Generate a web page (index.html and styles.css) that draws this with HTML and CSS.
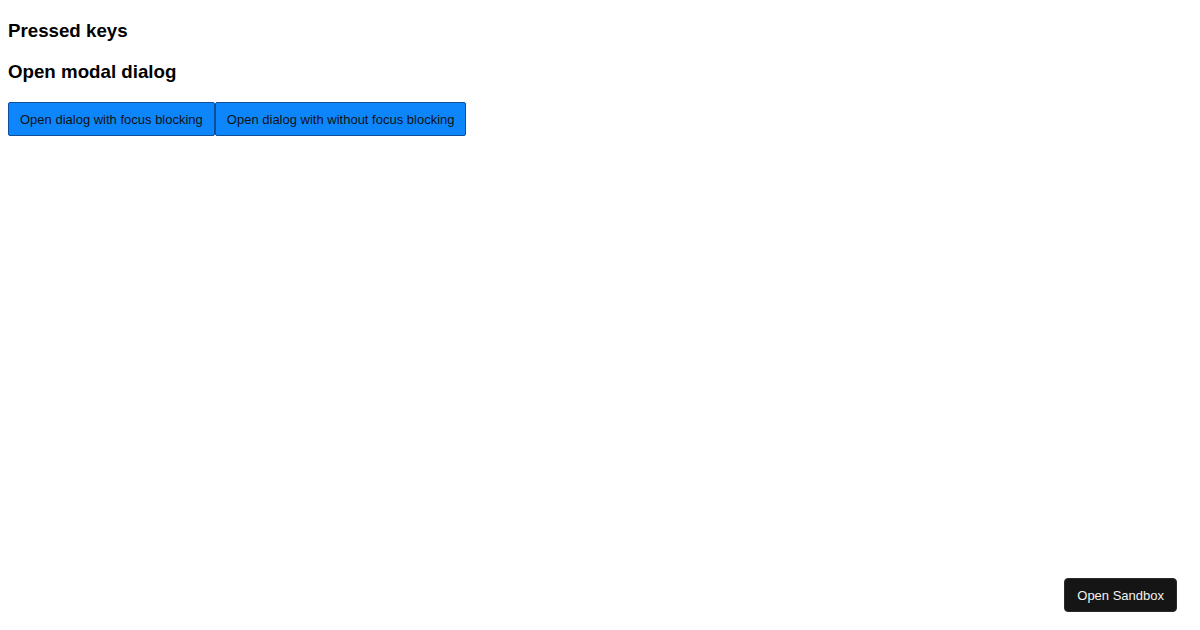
FILE: index.html
```html
<!DOCTYPE html>
<html>
<head>
<meta charset="utf-8">
<link rel="stylesheet" href="styles.css">
</head>
<body>
<main class="page">
<h3 class="title">Pressed keys</h3>
<h3 class="title">Open modal dialog</h3>
<div class="actions">
  <button class="btn">Open dialog with focus blocking</button><button class="btn">Open dialog with without focus blocking</button>
</div>
</main>
<button class="sandbox">Open Sandbox</button>
</body>
</html>
```
FILE: styles.css
```css
html, body {
  margin: 0;
  padding: 0;
}
body {
  font-family: "Liberation Sans", Arial, sans-serif;
  background: #fff;
  color: #000;
}
.page {
  display: flex;
  flex-direction: column;
  align-items: flex-start;
  padding: 20px 8px 0;
}
.title {
  font-size: 18.72px;
  font-weight: 700;
  margin: 0 0 19px;
  line-height: 22px;
}
.actions {
  display: flex;
}
.btn {
  font-family: "Liberation Sans", Arial, sans-serif;
  font-size: 13px;
  height: 34px;
  padding: 0 11px;
  background: #0d86fb;
  border: 1px solid #0d4f9a;
  border-radius: 2px;
  color: #111;
}
.sandbox {
  position: fixed;
  right: 23px;
  bottom: 18px;
  height: 34px;
  padding: 0 12px;
  background: #151515;
  color: #f2f2f2;
  border: 1px solid #2a2a2a;
  border-radius: 4px;
  font-family: "Liberation Sans", Arial, sans-serif;
  font-size: 13px;
}
```
